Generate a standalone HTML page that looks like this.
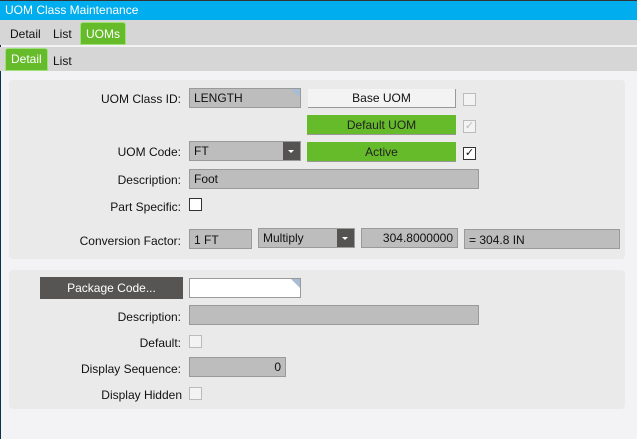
<!DOCTYPE html><html><head><style>
*{margin:0;padding:0;box-sizing:border-box}
body{width:637px;height:439px;overflow:hidden;background:#f3f3f5;font-family:"Liberation Sans",Arial,sans-serif;font-size:12px;color:#111;position:relative}
.a{position:absolute}
.t{background:#00adef;color:#fff;left:0;top:0;width:637px;height:20px;border-top:1px solid #333;padding:2px 5px;font-size:12px}
.r{background:#d6d6d6;left:0;width:637px}
.tab{top:3px;height:21px;line-height:22px;font-size:12px}
.sel{background:#66bb2a;color:#fff;border:1px solid #9fe07a;border-radius:3px 3px 0 0;padding:0 5px}
.p{background:#eaeaea;border-radius:4px;left:9px;width:616px}
.l{text-align:right;width:181px;left:0;height:20px;line-height:22px}
.f{background:#bdbdbd;border:1px solid #9a9a9a;height:20px;line-height:19px;padding:0 4px}
.cb{width:13px;height:13px;border:1px solid #bbb;background:#f3f3f3}
.g{background:#66bb2a;color:#222;text-align:center;line-height:20px;border-bottom:1px solid #999}
.dd{background:#555351;width:17px;top:0;right:0;height:18px}
.dd:after{content:"";position:absolute;left:5px;top:8px;border-left:3px solid transparent;border-right:3px solid transparent;border-top:3px solid #fff}
.corner{right:0;top:0;width:0;height:0;border-left:9px solid transparent;border-top:9px solid #a9bcd6}
</style></head><body>
<div class="a" style="left:0;top:0;width:1px;height:439px;background:#0c3050"></div>
<div class="a t">UOM Class Maintenance</div>
<div class="a r" style="top:20px;height:25px"></div>
<div class="a r" style="top:47px;height:24px"></div>
<div class="a" style="left:0;top:20px;width:637px;height:51px">
<span class="a tab" style="left:10px">Detail</span>
<span class="a tab" style="left:53px">List</span>
<span class="a tab sel" style="left:80px;top:2px;height:23px;line-height:23px">UOMs</span>
<span class="a tab sel" style="left:5px;top:28px;height:23px;line-height:21px">Detail</span>
<span class="a tab" style="left:53px;top:30px">List</span>
</div>
<div class="a p" style="top:80px;height:179px"></div>
<div class="a p" style="top:270px;height:139px"></div>

<div class="a l" style="top:88px">UOM Class ID:</div>
<div class="a f" style="left:189px;top:88px;width:112px">LENGTH<div class="a corner"></div></div>
<div class="a" style="left:308px;top:89px;width:148px;height:19px;background:#f3f3f3;border-right:1px solid #999;border-bottom:1px solid #999;text-align:center;line-height:19px">Base UOM</div>
<div class="a cb" style="left:463px;top:93px"></div>
<div class="a g" style="left:307px;top:115px;width:149px;height:20px">Default UOM</div>
<div class="a cb" style="left:463px;top:120px;color:#bbb;font-size:11px;line-height:11px;text-align:center">✓</div>
<div class="a l" style="top:141px">UOM Code:</div>
<div class="a f" style="left:189px;top:141px;width:112px">FT<div class="a dd"></div></div>
<div class="a g" style="left:307px;top:142px;width:149px;height:20px">Active</div>
<div class="a cb" style="left:463px;top:147px;border-color:#333;background:#fff;font-size:11px;line-height:11px;text-align:center">✓</div>
<div class="a l" style="top:169px">Description:</div>
<div class="a f" style="left:189px;top:169px;width:290px">Foot</div>
<div class="a l" style="top:196px">Part Specific:</div>
<div class="a cb" style="left:189px;top:198px;border-color:#333;background:#fff"></div>
<div class="a l" style="top:230px">Conversion Factor:</div>
<div class="a f" style="left:189px;top:229px;width:63px;line-height:21px">1 FT</div>
<div class="a f" style="left:258px;top:228px;width:97px">Multiply<div class="a dd"></div></div>
<div class="a f" style="left:361px;top:228px;width:97px;text-align:right">304.8000000</div>
<div class="a f" style="left:464px;top:229px;width:156px;line-height:21px">= 304.8 IN</div>

<div class="a" style="left:40px;top:277px;width:143px;height:22px;background:#575553;color:#fff;text-align:center;line-height:22px">Package Code...</div>
<div class="a f" style="left:189px;top:278px;width:112px;background:#fff"><div class="a corner"></div></div>
<div class="a l" style="top:306px">Description:</div>
<div class="a f" style="left:189px;top:305px;width:290px"></div>
<div class="a l" style="top:332px">Default:</div>
<div class="a cb" style="left:189px;top:335px"></div>
<div class="a l" style="top:358px">Display Sequence:</div>
<div class="a f" style="left:189px;top:357px;width:97px;text-align:right">0</div>
<div class="a l" style="top:384px;width:182px">Display Hidden</div>
<div class="a cb" style="left:189px;top:387px"></div>
</body></html>
